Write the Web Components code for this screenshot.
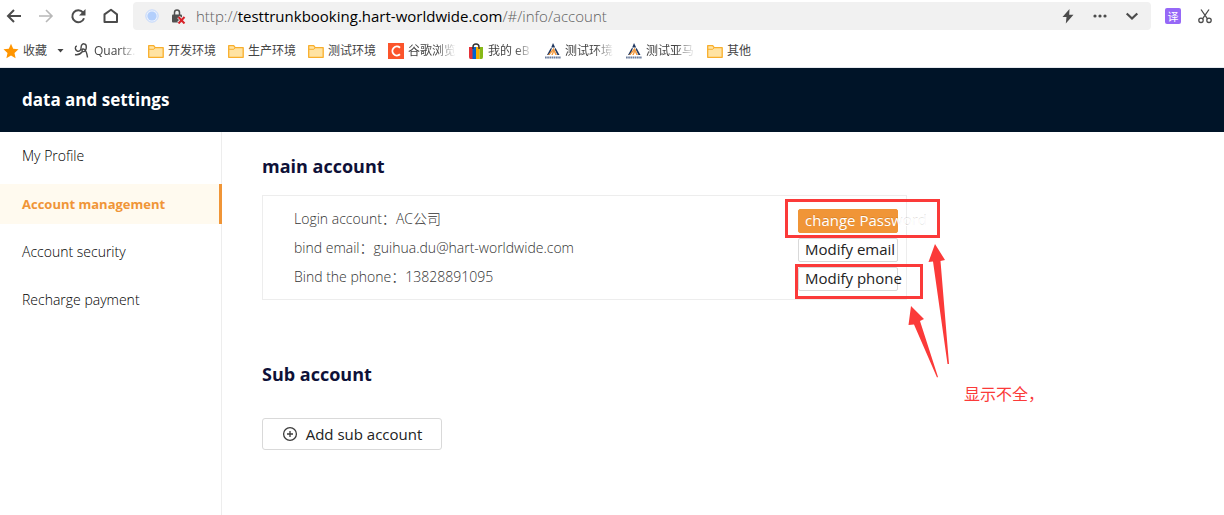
<!DOCTYPE html>
<html lang="en">
<head>
<meta charset="utf-8">
<title>data and settings</title>
<style>
html,body{margin:0;min-height:100%}
body{font-family:"Open Sans","Noto Sans CJK SC",sans-serif;font-size:14px;color:#2b2b2b;background:#fff}
</style>
</head>
<body>
<app-page></app-page>
<script>
const define=(name,css,html)=>customElements.define(name,class extends HTMLElement{
  constructor(){
    super();
    const t=document.createElement('template');
    t.innerHTML=`<style>*{box-sizing:border-box}${css}</style>${typeof html==='function'?html(this):html}`;
    this.attachShadow({mode:'open'}).append(t.content.cloneNode(true));
  }
});

const icons={
  back:['0 0 16 16','<path d="M15 8H2M8 2 2 8l6 6" fill="none" stroke="#4c4c4c" stroke-width="2"/>'],
  forward:['0 0 16 16','<path d="M1 8h13M8 2l6 6-6 6" fill="none" stroke="#b8b8b8" stroke-width="1.6"/>'],
  reload:['0 0 16 16','<path d="M14 10.200A6 6 0 1 1 13 4.500" fill="none" stroke="#4c4c4c" stroke-width="2"/><path d="M15.500 1v6.500H9z" fill="#4c4c4c"/>'],
  home:['0 0 16 16','<path d="M2.500 14V6.400L9 1.800l6 4.600V14z" fill="none" stroke="#4c4c4c" stroke-width="2" stroke-linejoin="round"/>'],
  site:['0 0 16 16','<circle cx="8" cy="8" r="6.2" fill="#eaf1fd" stroke="#c4d8fb"/><circle cx="8" cy="8" r="4.6" fill="#b3cffc"/>'],
  lock:['0 0 16 16','<path d="M4.500 7V4.500a2.500 2.500 0 0 1 5 0V7" fill="none" stroke="#505050" stroke-width="1.500"/><rect x="2" y="6.500" width="10" height="8" rx="1" fill="#505050"/><path d="m8.500 9 6 6m0-6-6 6" stroke="#f1f1f1" stroke-width="3.500"/><path d="m8.500 9 6 6.500m0-6.500-6 6.500" stroke="#d8232a" stroke-width="2"/>'],
  bolt:['0 0 16 16','<path d="M9.500 1 2.500 9h4L5.800 15.500 13.500 6.800h-4.300z" fill="#4c4c4c"/>'],
  more:['0 0 16 16','<g fill="#4c4c4c"><circle cx="3" cy="8" r="1.600"/><circle cx="8" cy="8" r="1.600"/><circle cx="13" cy="8" r="1.600"/></g>'],
  down:['0 0 16 16','<path d="m2.700 5.500 5.300 5 5.300-5" fill="none" stroke="#4c4c4c" stroke-width="2.200"/>'],
  cut:['0 0 16 16','<g fill="none" stroke="#4c4c4c" stroke-width="1.300"><path d="m4 1.500 6.500 9.300M12 1.500 5.500 10.800"/><circle cx="4" cy="12.300" r="2.200"/><circle cx="12" cy="12.300" r="2.200"/></g>'],
  star:['0 0 16 16','<path d="m8 .8 2.200 4.900 5.300.6-4 3.600 1.100 5.300L8 12.500l-4.600 2.700 1.100-5.300-4-3.600 5.300-.6z" fill="#ff9500"/>'],
  quartz:['0 0 16 16','<path d="M2.800 3C.8 3.500.8 6.500 3 8c2.400 1 4.300-1 4.200-4.500C7.500-.3 12.500 0 12.300 4c0 3.500-1.500 5-3.500 4.500C7 7.500 8.300 5 10.300 6.300 12.700 8 13 11 13.500 14.500M1 11.500c3 .8 5.500-.5 7.500-3" fill="none" stroke="#484848" stroke-width="1.400"/>'],
  folder:['0 0 16 16','<path d="M.7 2.700h5l1.500 2h8v9.600H.7z" fill="#ffe3a3" stroke="#f8ae2c" stroke-width="1.300" stroke-linejoin="round"/><path d="M7 4.700 5.800 6.300H.7" fill="none" stroke="#f8ae2c"/>'],
  cee:['0 0 16 16','<path d="M0 0h16v16H0z" fill="#fb542b"/><path d="M12 4.700A4.500 4.500 0 1 0 12 11.300" fill="none" stroke="#fff" stroke-width="1.900"/>'],
  bag:['0 0 16 16','<path d="M5 6V4c0-4 6-4 6 0v2" fill="none" stroke="#333" stroke-width="1.400"/><path d="M1 4h4v12H2.500Q1 16 1 14z" fill="#e53238"/><path d="M4.500 4H8v12H4.500z" fill="#0064d2"/><path d="M8 4h3.600v12H8z" fill="#f5af02"/><path d="M11.600 4H15v10q0 2-1.500 2h-1.900z" fill="#86b817"/><path d="M5 6V4M11 6V4" stroke="#333" stroke-width="1.400"/>'],
  hart:['0 0 16 16','<path d="m8 0 2.200 4.500H6.200z" fill="#203861"/><path d="M5.500 5.500 7 5 4.500 12H2zM10.600 5 14.500 12H12.500L9.500 6z" fill="#203861"/><path d="M8.700 4.800 12 12H10.300L9 9l-1.200 3H6.200L8 8l-3.500 4H3z" fill="#f39b41"/><path d="M0 14.500h16" stroke="#6b7d9d" stroke-width="2" stroke-dasharray="1.700 .5"/>'],
  plus:['0 0 16 16','<g fill="none" stroke="#3c3c3c" stroke-width="1.300"><circle cx="8" cy="8" r="6.400"/><path d="M8 5v6M5 8h6"/></g>']
};

define('ui-icon',':host{display:inline-flex;flex:none;width:16px;height:16px}svg{width:100%;height:100%;display:block}',
  el=>{const [vb,body]=icons[el.getAttribute('name')];return `<svg viewBox="${vb}" aria-hidden="true">${body}</svg>`});

define('icon-button',':host{display:inline-flex;flex:none}button{border:0;background:none;padding:0;display:flex}',
  el=>`<button type="button" aria-label="${el.getAttribute('label')}"><ui-icon name="${el.getAttribute('icon')}"></ui-icon></button>`);

define('book-mark',`
:host{display:inline-flex;flex:none;font-size:12px;line-height:16px}
a{display:flex;align-items:center;gap:4px;color:#444;text-decoration:none}
span{white-space:nowrap;overflow:hidden;width:48px}
:host([size=s]) span{width:24px}
:host([size=m]) span{width:42px}
:host([size=l]) span{width:45px}
:host([fade]) span{-webkit-mask-image:linear-gradient(90deg,#000 60%,transparent);mask-image:linear-gradient(90deg,#000 60%,transparent)}
:host([icon=hart]) span{width:49px}
`,el=>`<a href="#"><ui-icon name="${el.getAttribute('icon')}"></ui-icon><span><slot></slot></span></a>`);

define('browser-bar',`
:host{display:block;border-bottom:1px solid #e6e9ee;background:#fff}
.nav{display:flex;align-items:center;padding:2px 11px 0 6px;height:30px}
.keys{display:flex;gap:16px;width:127px}
.address{flex:1;min-width:0;display:flex;align-items:center;height:28px;background:#f1f1f1;border-radius:4px;padding:0 11px}
.address ui-icon{margin-right:10px}
.url{flex:1;min-width:0;overflow:hidden;white-space:nowrap;font-size:15px;line-height:24px;font-weight:300;color:#606060;outline:0}
.url b{font-weight:400;color:#000}
.tools{display:flex;gap:16px}
.ext{display:flex;gap:16px;align-items:center;margin-left:14px}
.tr{border:0;border-radius:2px;padding:0;width:16px;height:16px;background:#9668f7;color:#fff;font:11px/16px "Noto Sans CJK SC",sans-serif}
.marks{display:flex;align-items:center;gap:12px;height:37px;padding:4px 3px 0;overflow:hidden}
.marks .caret{width:7px;height:4px;margin:0 -2px;background:#444;clip-path:polygon(0 0,100% 0,50% 100%)}
`,`
<nav class="nav" aria-label="Browser">
 <div class="keys"><icon-button icon="back" label="Back"></icon-button><icon-button icon="forward" label="Forward"></icon-button><icon-button icon="reload" label="Reload"></icon-button><icon-button icon="home" label="Home"></icon-button></div>
 <div class="address"><ui-icon name="site"></ui-icon><ui-icon name="lock"></ui-icon>
  <div class="url" role="textbox" aria-label="Address" contenteditable="true" spellcheck="false">http://<b>testtrunkbooking.hart-worldwide.com</b>/#/info/account</div>
  <div class="tools"><icon-button icon="bolt" label="Speed mode"></icon-button><icon-button icon="more" label="More"></icon-button><icon-button icon="down" label="Expand"></icon-button></div>
 </div>
 <div class="ext"><button class="tr" type="button">译</button><icon-button icon="cut" label="Screenshot"></icon-button></div>
</nav>
<nav class="marks" aria-label="Bookmarks">
 <book-mark icon="star" size="s">收藏</book-mark><span class="caret"></span>
 <book-mark icon="quartz" size="m" fade>Quartz.</book-mark>
 <book-mark icon="folder">开发环境</book-mark><book-mark icon="folder">生产环境</book-mark><book-mark icon="folder">测试环境</book-mark>
 <book-mark icon="cee" fade>谷歌浏览</book-mark><book-mark icon="bag" size="l" fade>我的 eB</book-mark>
 <book-mark icon="hart" fade>测试环境</book-mark><book-mark icon="hart" fade>测试亚马</book-mark>
 <book-mark icon="folder" size="s">其他</book-mark>
</nav>`);

define('page-header',`
:host{display:flex;align-items:center;height:64px;padding:0 22px;background:#001428;color:#fff}
h1{margin:0;font-size:17px;line-height:24px;font-weight:700}
`,'<h1><slot></slot></h1>');

define('nav-item',`
:host{display:block}
a{display:flex;align-items:center;height:40px;padding:0 22px;color:#000;text-decoration:none;line-height:20px;font-weight:300}
:host([active]) a{background:#fffaef;color:#f09537;font-size:13px;font-weight:700;border-right:3px solid #f09537}
`,el=>`<a href="#"${el.hasAttribute('active')?' aria-current="page"':''}><slot></slot></a>`);

define('side-nav',`
:host{display:block;width:222px;flex:none;background:linear-gradient(#ededed,#ededed) right/1px 100% no-repeat}
nav{display:grid;gap:8px;padding-top:4px}
`,'<nav aria-label="Settings"><slot></slot></nav>');

define('small-button',`
:host{display:block}
button{width:100px;height:24px;display:flex;align-items:center;padding:0 6px 2px;border:1px solid #d9d9d9;border-radius:2px;background:#fff;color:#222;font:inherit;font-size:15px;line-height:20px;white-space:nowrap;overflow:visible}
:host([primary]) button{background:#f09537;border-color:#f09537;color:#fff;text-shadow:0 -1px 0 rgba(0,0,0,.12)}
`,'<button type="button"><slot></slot></button>');

define('info-row',`
:host{display:block;line-height:29px;font-weight:300;color:#333;white-space:nowrap}
`,el=>`${el.getAttribute('label')}：<slot></slot>`);

define('account-card',`
:host{display:flex;justify-content:space-between;max-width:645px;border:1px solid #ededed;padding:8px 8px 8px 31px}
.actions{display:grid;gap:5px;padding-top:5px;align-content:start}
`,'<div><slot></slot></div><div class="actions"><slot name="action"></slot></div>');

define('add-button',`
:host{display:block}
button{display:flex;align-items:center;justify-content:center;gap:8px;width:180px;height:32px;padding:0 0 1px;border:1px solid #d9d9d9;border-radius:3px;background:#fff;color:#222;font:inherit;font-size:15px;line-height:20px}
`,'<button type="button"><ui-icon name="plus"></ui-icon><slot></slot></button>');

define('markup-notes',`
:host{position:absolute;left:563px;top:67px;width:260px;height:210px;pointer-events:none;color:#fb3a39}
svg{position:absolute;inset:0;width:100%;height:100%}
p{position:absolute;left:179px;top:183px;margin:0;font-size:16px;line-height:24px;white-space:nowrap}
`,`<svg viewBox="0 0 260 210" aria-hidden="true"><g fill="none" stroke="#fb3a39" stroke-width="3"><rect x="1.500" y="1.500" width="152" height="36"/><rect x="11.500" y="66.500" width="125" height="32"/></g>
<path fill="#fb3a39" d="m150 45 10 16-4.500 1 8.500 103h-1.500L148 62.500l-4.500.5zM126 107l13 13-4 2 18 56-1 .5-23-53-5.500.5z"/></svg><p><slot></slot></p>`);

define('app-page',`
:host{display:flex;flex-direction:column;min-height:100vh}
.body{display:flex;flex:1}
main{position:relative;flex:1;min-width:0;padding:20px 40px}
h2{margin:0;font-size:18px;line-height:28px;color:#0e1138;font-weight:700}
account-card{margin:15px 0 60px}
add-button{margin-top:30px}
`,`
<browser-bar></browser-bar>
<page-header>data and settings</page-header>
<div class="body">
 <side-nav><nav-item>My Profile</nav-item><nav-item active>Account management</nav-item><nav-item>Account security</nav-item><nav-item>Recharge payment</nav-item></side-nav>
 <main>
  <h2>main account</h2>
  <account-card>
   <info-row label="Login account">AC公司</info-row><info-row label="bind email">guihua.du@hart-worldwide.com</info-row><info-row label="Bind the phone">13828891095</info-row>
   <small-button slot="action" primary>change Password</small-button><small-button slot="action">Modify email</small-button><small-button slot="action">Modify phone</small-button>
  </account-card>
  <h2>Sub account</h2>
  <add-button>Add sub account</add-button>
  <markup-notes>显示不全，</markup-notes>
 </main>
</div>`);
</script>
</body>
</html>
